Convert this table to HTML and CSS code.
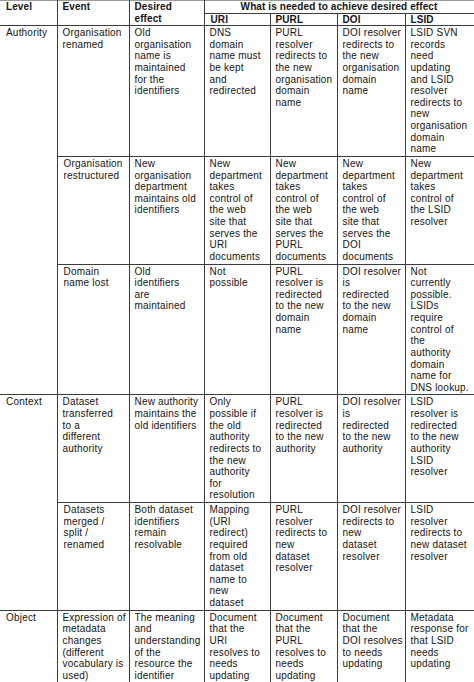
FILE: index.html
```html
<!DOCTYPE html>
<html>
<head>
<meta charset="utf-8">
<link rel="stylesheet" href="styles.css">
</head>
<body>
<table class="grid">
  <colgroup>
    <col class="c-level">
    <col class="c-event">
    <col class="c-desired">
    <col class="c-uri">
    <col class="c-purl">
    <col class="c-doi">
    <col class="c-lsid">
  </colgroup>
  <thead>
    <tr class="head-top">
      <th rowspan="2">Level</th>
      <th rowspan="2">Event</th>
      <th rowspan="2">Desired<br>effect</th>
      <th colspan="4" class="span-head">What is needed to achieve desired effect</th>
    </tr>
    <tr class="head-sub">
      <th>URI</th>
      <th>PURL</th>
      <th>DOI</th>
      <th>LSID</th>
    </tr>
  </thead>
  <tbody>
    <tr>
      <td rowspan="3">Authority</td>
      <td>Organisation<br>renamed</td>
      <td>Old<br>organisation<br>name is<br>maintained<br>for the<br>identifiers</td>
      <td>DNS<br>domain<br>name must<br>be kept<br>and<br>redirected</td>
      <td>PURL<br>resolver<br>redirects to<br>the new<br>organisation<br>domain<br>name</td>
      <td>DOI resolver<br>redirects to<br>the new<br>organisation<br>domain<br>name</td>
      <td>LSID SVN<br>records<br>need<br>updating<br>and LSID<br>resolver<br>redirects to<br>new<br>organisation<br>domain<br>name</td>
    </tr>
    <tr>
      <td>Organisation<br>restructured</td>
      <td>New<br>organisation<br>department<br>maintains old<br>identifiers</td>
      <td>New<br>department<br>takes<br>control of<br>the web<br>site that<br>serves the<br>URI<br>documents</td>
      <td>New<br>department<br>takes<br>control of<br>the web<br>site that<br>serves the<br>PURL<br>documents</td>
      <td>New<br>department<br>takes<br>control of<br>the web<br>site that<br>serves the<br>DOI<br>documents</td>
      <td>New<br>department<br>takes<br>control of<br>the LSID<br>resolver</td>
    </tr>
    <tr>
      <td>Domain<br>name lost</td>
      <td>Old<br>identifiers<br>are<br>maintained</td>
      <td>Not<br>possible</td>
      <td>PURL<br>resolver is<br>redirected<br>to the new<br>domain<br>name</td>
      <td>DOI resolver<br>is<br>redirected<br>to the new<br>domain<br>name</td>
      <td>Not<br>currently<br>possible.<br>LSIDs<br>require<br>control of<br>the<br>authority<br>domain<br>name for<br>DNS lookup.</td>
    </tr>
    <tr>
      <td rowspan="2">Context</td>
      <td>Dataset<br>transferred<br>to a<br>different<br>authority</td>
      <td>New authority<br>maintains the<br>old identifiers</td>
      <td>Only<br>possible if<br>the old<br>authority<br>redirects to<br>the new<br>authority<br>for<br>resolution</td>
      <td>PURL<br>resolver is<br>redirected<br>to the new<br>authority</td>
      <td>DOI resolver<br>is<br>redirected<br>to the new<br>authority</td>
      <td>LSID<br>resolver is<br>redirected<br>to the new<br>authority<br>LSID<br>resolver</td>
    </tr>
    <tr>
      <td>Datasets<br>merged /<br>split /<br>renamed</td>
      <td>Both dataset<br>identifiers<br>remain<br>resolvable</td>
      <td>Mapping<br>(URI<br>redirect)<br>required<br>from old<br>dataset<br>name to<br>new<br>dataset</td>
      <td>PURL<br>resolver<br>redirects to<br>new<br>dataset<br>resolver</td>
      <td>DOI resolver<br>redirects to<br>new<br>dataset<br>resolver</td>
      <td>LSID<br>resolver<br>redirects to<br>new dataset<br>resolver</td>
    </tr>
    <tr class="last-row">
      <td>Object</td>
      <td>Expression of<br>metadata<br>changes<br>(different<br>vocabulary is<br>used)</td>
      <td>The meaning<br>and<br>understanding<br>of the<br>resource the<br>identifier</td>
      <td>Document<br>that the<br>URI<br>resolves to<br>needs<br>updating</td>
      <td>Document<br>that the<br>PURL<br>resolves to<br>needs<br>updating</td>
      <td>Document<br>that the<br>DOI resolves<br>to needs<br>updating</td>
      <td>Metadata<br>response for<br>that LSID<br>needs<br>updating</td>
    </tr>
  </tbody>
</table>
</body>
</html>
```

FILE: styles.css
```css
html, body {
  margin: 0;
  padding: 0;
  background: #ffffff;
  overflow: hidden;
}

.grid {
  border-collapse: collapse;
  table-layout: fixed;
  width: 474px;
  font-family: "Liberation Sans", Arial, sans-serif;
  font-size: 10px;
  letter-spacing: 0.2px;
  color: #141414;
}

.c-level { width: 57px; }
.c-event { width: 72px; }
.c-desired { width: 75px; }
.c-uri { width: 66px; }
.c-purl { width: 67px; }
.c-doi { width: 68px; }
.c-lsid { width: 69px; }

.grid td,
.grid th {
  border: 1px solid #3c3c3c;
  padding: 1px 2px 1px 5px;
  vertical-align: top;
  text-align: left;
  line-height: 11.625px;
  white-space: nowrap;
  overflow: hidden;
}

.grid th {
  font-weight: bold;
  padding-top: 0;
  padding-bottom: 0;
  line-height: 11.5px;
  letter-spacing: 0.1px;
}

.grid .head-top th {
  border-top-color: #9a9a9a;
}

.grid .span-head {
  text-align: center;
  padding-left: 2px;
}

.grid tr > :first-child {
  border-left: none;
  padding-left: 6px;
}

.grid .last-row td {
  padding-bottom: 20px;
}
```
